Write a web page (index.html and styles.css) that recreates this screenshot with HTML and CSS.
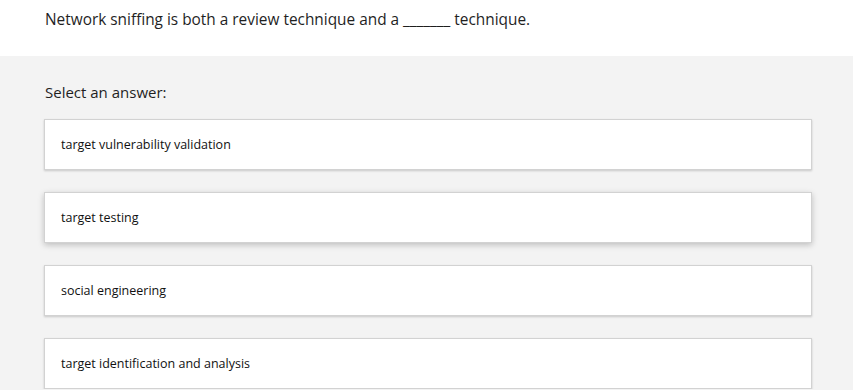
FILE: index.html
```html
<!DOCTYPE html>
<html lang="en">
<head>
    <meta charset="UTF-8" />
    <title>Question</title>
    <meta name="viewport" content="width=device-width, initial-scale=1.0" />
    <link rel="stylesheet" href="styles.css">
</head>
<body>
    <div class="quiz">
        <header class="quiz-question">
            <p>Network sniffing is both a review technique and a _______ technique.</p>
        </header>
        <section class="quiz-answers">
            <h2>Select an answer:</h2>
            <ul>
                <li>target vulnerability validation</li>
                <li class="is-hover">target testing</li>
                <li>social engineering</li>
                <li>target identification and analysis</li>
            </ul>
        </section>
    </div>
</body>
</html>
```

FILE: styles.css
```css
body {
    margin: 0;
    background: #f3f3f3;
    font-family: "Open Sans", "Noto Sans", sans-serif;
    color: #1f1f1f;
}

.quiz-question {
    background: #fff;
    height: 56px;
    box-sizing: border-box;
    padding: 9px 45px 0;
}

.quiz-question p {
    margin: 0;
    font-size: 15.4px;
    line-height: 22px;
}

.quiz-answers {
    padding: 25px 41px 0 44px;
}

.quiz-answers h2 {
    margin: 0 0 16px 1px;
    font-size: 15px;
    font-weight: normal;
    line-height: 22px;
}

.quiz-answers ul {
    list-style: none;
    margin: 0;
    padding: 0;
    display: flex;
    flex-direction: column;
    gap: 22px;
}

.quiz-answers li {
    background: #fff;
    border: 1px solid #d2d2d2;
    box-shadow: 0 1px 2px rgba(0, 0, 0, 0.18);
    padding: 16px 16px;
    font-size: 12.5px;
    line-height: 17px;
    color: #111;
}

.quiz-answers li.is-hover {
    box-shadow: 0 2px 6px rgba(0, 0, 0, 0.22);
}
```
